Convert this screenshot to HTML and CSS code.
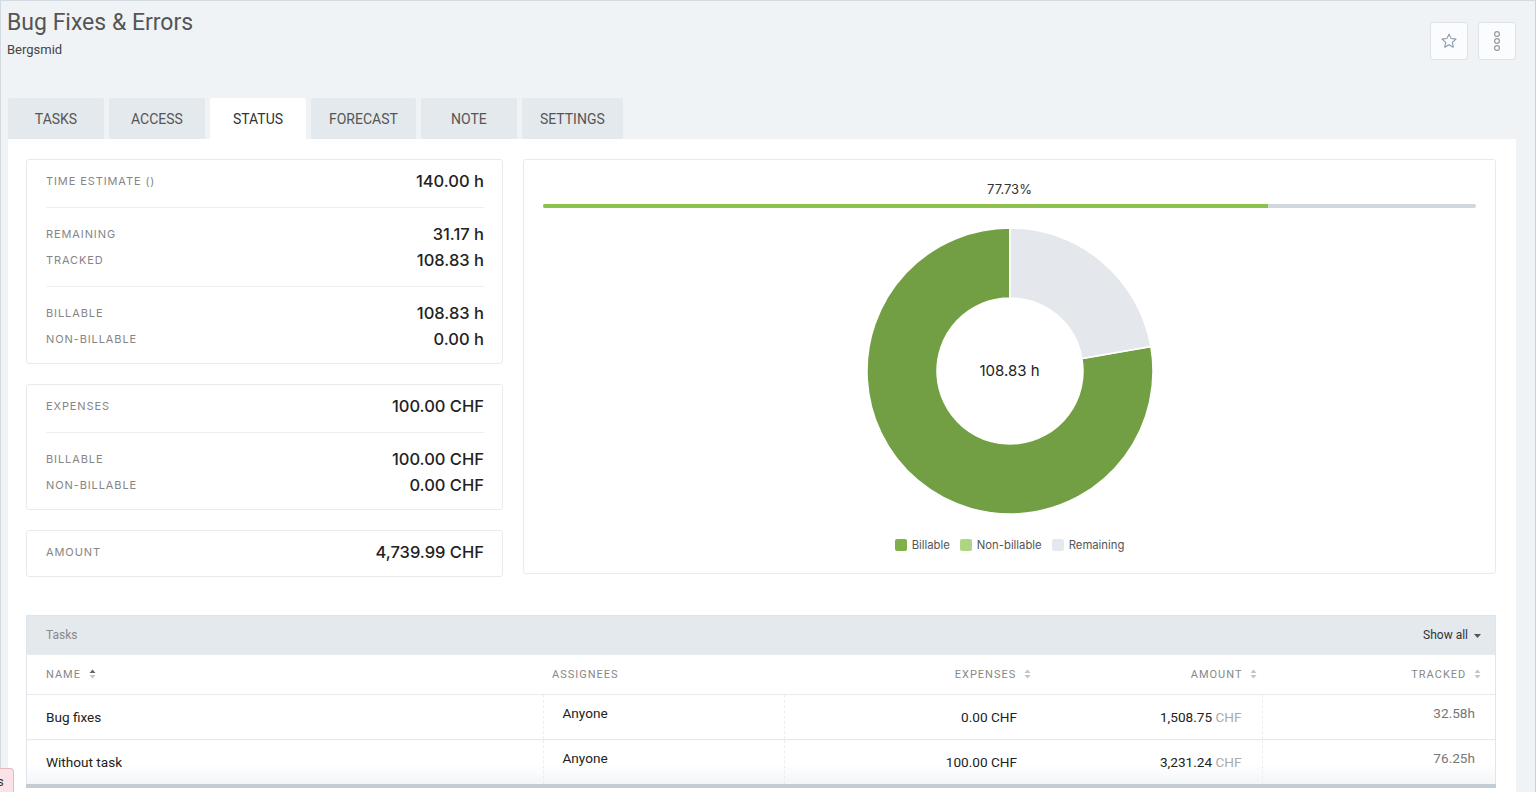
FILE: index.html
```html
<!DOCTYPE html>
<html>
<head>
	<meta charset="utf-8">
	<title>Bug Fixes &amp; Errors</title>
	<link rel="stylesheet" href="styles.css">
</head>
<body>
	<div class="frame">
		<div class="top">
			<div class="heading">
				<h1>Bug Fixes &amp; Errors</h1>
				<div class="client">Bergsmid</div>
			</div>
			<div class="actions">
				<button class="icon_btn" title="Favorite">
					<svg width="18" height="18" viewBox="0 0 24 24"><path d="M12 2.8l2.8 6 6.5.7-4.9 4.4 1.4 6.4L12 17l-5.8 3.3 1.4-6.4-4.9-4.4 6.5-.7z" fill="none" stroke="#8797a6" stroke-width="1.4" stroke-linejoin="round"/></svg>
				</button>
				<button class="icon_btn" title="More">
					<svg width="10" height="22" viewBox="0 0 10 22"><circle cx="5" cy="4" r="2.4" fill="none" stroke="#9a9a9a" stroke-width="1.2"/><circle cx="5" cy="11" r="2.4" fill="none" stroke="#9a9a9a" stroke-width="1.2"/><circle cx="5" cy="18" r="2.4" fill="none" stroke="#9a9a9a" stroke-width="1.2"/></svg>
				</button>
			</div>
		</div>

		<div class="tabs">
			<div class="tab">Tasks</div>
			<div class="tab">Access</div>
			<div class="tab active">Status</div>
			<div class="tab">Forecast</div>
			<div class="tab">Note</div>
			<div class="tab">Settings</div>
		</div>

		<div class="panel">
			<div class="overview">
				<div class="stats">
					<div class="card">
						<div class="section">
							<div class="row"><span class="label">Time estimate ()</span><span class="value">140.00 h</span></div>
						</div>
						<div class="section">
							<div class="row"><span class="label">Remaining</span><span class="value">31.17 h</span></div>
							<div class="row"><span class="label">Tracked</span><span class="value">108.83 h</span></div>
						</div>
						<div class="section">
							<div class="row"><span class="label">Billable</span><span class="value">108.83 h</span></div>
							<div class="row"><span class="label">Non-billable</span><span class="value">0.00 h</span></div>
						</div>
					</div>
					<div class="card">
						<div class="section">
							<div class="row"><span class="label">Expenses</span><span class="value">100.00 CHF</span></div>
						</div>
						<div class="section">
							<div class="row"><span class="label">Billable</span><span class="value">100.00 CHF</span></div>
							<div class="row"><span class="label">Non-billable</span><span class="value">0.00 CHF</span></div>
						</div>
					</div>
					<div class="card">
						<div class="section">
							<div class="row"><span class="label">Amount</span><span class="value">4,739.99 CHF</span></div>
						</div>
					</div>
				</div>

				<div class="card chart">
					<div class="percent">77.73%</div>
					<div class="progress"><div class="progress_fill" style="width: 77.73%"></div></div>
					<div class="donut">
						<svg width="290" height="290" viewBox="-145 -145 290 290">
							<path d="M140.89,-24.47 A143,143 0 1 1 0,-143 L0,-73 A73,73 0 1 0 71.93,-12.49 Z" fill="#739f44" stroke="#fff" stroke-width="1.5"/>
							<path d="M0,-143 A143,143 0 0 1 140.89,-24.47 L71.93,-12.49 A73,73 0 0 0 0,-73 Z" fill="#e4e8ed" stroke="#fff" stroke-width="1.5"/>
						</svg>
						<div class="donut_label">108.83 h</div>
					</div>
					<div class="legend">
						<span class="legend_item"><i class="sw billable"></i>Billable</span>
						<span class="legend_item"><i class="sw nonbillable"></i>Non-billable</span>
						<span class="legend_item"><i class="sw remaining"></i>Remaining</span>
					</div>
				</div>
			</div>

			<div class="tasks">
				<div class="tasks_head">
					<span class="tasks_title">Tasks</span>
					<span class="show_all">Show all <svg width="7" height="4" viewBox="0 0 7 4"><path d="M0 0h7L3.5 4z" fill="#555"/></svg></span>
				</div>
				<table>
					<colgroup>
						<col style="width: 516px">
						<col style="width: 241px">
						<col style="width: 261px">
						<col style="width: 217px">
						<col>
					</colgroup>
					<thead>
						<tr>
							<th class="c_name">Name <svg class="sort" width="7" height="10" viewBox="0 0 7 10"><path d="M0.5 4L3.5 0.5 6.5 4z" fill="#666"/><path d="M0.5 6L3.5 9.5 6.5 6z" fill="#c4c4c4"/></svg></th>
							<th class="c_assign">Assignees</th>
							<th class="c_exp">Expenses <svg class="sort" width="7" height="10" viewBox="0 0 7 10"><path d="M0.5 4L3.5 0.5 6.5 4z" fill="#c4c4c4"/><path d="M0.5 6L3.5 9.5 6.5 6z" fill="#c4c4c4"/></svg></th>
							<th class="c_amount">Amount <svg class="sort" width="7" height="10" viewBox="0 0 7 10"><path d="M0.5 4L3.5 0.5 6.5 4z" fill="#c4c4c4"/><path d="M0.5 6L3.5 9.5 6.5 6z" fill="#c4c4c4"/></svg></th>
							<th class="c_tracked">Tracked <svg class="sort" width="7" height="10" viewBox="0 0 7 10"><path d="M0.5 4L3.5 0.5 6.5 4z" fill="#c4c4c4"/><path d="M0.5 6L3.5 9.5 6.5 6z" fill="#c4c4c4"/></svg></th>
						</tr>
					</thead>
					<tbody>
						<tr>
							<td class="c_name">Bug fixes</td>
							<td class="c_assign">Anyone</td>
							<td class="c_exp">0.00 CHF</td>
							<td class="c_amount">1,508.75 <span class="cur">CHF</span></td>
							<td class="c_tracked">32.58h</td>
						</tr>
						<tr class="last">
							<td class="c_name">Without task</td>
							<td class="c_assign">Anyone</td>
							<td class="c_exp">100.00 CHF</td>
							<td class="c_amount">3,231.24 <span class="cur">CHF</span></td>
							<td class="c_tracked">76.25h</td>
						</tr>
					</tbody>
				</table>
				<div class="scrollbar"></div>
			</div>
		</div>
	</div>
	<div class="corner_tab">s</div>
</body>
</html>
```

FILE: styles.css
```css
html, body {
	margin: 0;
	height: 792px;
	overflow: hidden;
}
body {
	font-family: Roboto, "Liberation Sans", sans-serif;
	color: #222;
	background-color: #eff3f6;
}
.frame {
	height: 792px;
	box-sizing: border-box;
	border-top: 1px solid #d3dbe1;
	border-left: 1px solid #d3dbe1;
	border-right: 1px solid #c9d2d9;
}

/* header */
.top {
	height: 97px;
	box-sizing: border-box;
	display: flex;
	justify-content: space-between;
	padding: 7px 19px 0 6px;
}
.top h1 {
	margin: 0;
	font-size: 23px;
	line-height: 30px;
	font-weight: 400;
	color: #555;
}
.client {
	font-size: 13px;
	line-height: 18px;
	margin-top: 3px;
	color: #444;
}
.actions {
	display: flex;
	gap: 10px;
	margin-top: 14px;
}
.icon_btn {
	width: 38px;
	height: 38px;
	padding: 0;
	display: flex;
	align-items: center;
	justify-content: center;
	background: #fbfcfd;
	border: 1px solid #dde3e8;
	border-radius: 3px;
}

/* tabs */
.tabs {
	display: flex;
	gap: 5px;
	padding-left: 7px;
}
.tab {
	min-width: 96px;
	height: 41px;
	box-sizing: border-box;
	padding: 0 18px;
	display: flex;
	align-items: center;
	justify-content: center;
	background: #e4e9ed;
	border-radius: 2px 2px 0 0;
	font-size: 14px;
	text-transform: uppercase;
	color: #555;
}
.tab.active {
	background: #fff;
	color: #333;
}

/* panel */
.panel {
	margin: 0 19px 0 7px;
	background: #fff;
	height: 653px;
	padding: 20px 20px 0 18px;
	box-sizing: border-box;
}
.overview {
	display: grid;
	grid-template-columns: 477px 1fr;
	gap: 20px;
}
.stats {
	display: flex;
	flex-direction: column;
	gap: 20px;
}
.card {
	border: 1px solid #e6ebef;
	border-radius: 3px;
	padding: 8px 18px 11px 19px;
	font-family: Inter, "Noto Sans", sans-serif;
}
.section {
	padding: 13px 0;
	border-top: 1px solid #edf0f3;
}
.section:first-child {
	padding-top: 0;
	border-top: none;
}
.section:last-child {
	padding-bottom: 0;
}
.row {
	height: 26px;
	display: flex;
	align-items: center;
	justify-content: space-between;
}
.label {
	font-size: 11px;
	letter-spacing: 0.9px;
	text-transform: uppercase;
	color: #858585;
}
.value {
	font-size: 16.5px;
	font-weight: 500;
	color: #222;
}

/* chart */
.chart {
	padding: 21px 19px 20px 19px;
	display: flex;
	flex-direction: column;
	align-items: center;
	margin-bottom: 3px;
}
.percent {
	font-size: 13px;
	line-height: 16px;
	color: #333;
}
.progress {
	align-self: stretch;
	height: 4px;
	margin-top: 7px;
	background: #cfd8dd;
	border-radius: 2px;
	overflow: hidden;
}
.progress_fill {
	height: 100%;
	background: #8cc04f;
}
.donut {
	position: relative;
	width: 290px;
	height: 290px;
	margin-top: 18px;
}
.donut svg {
	display: block;
}
.donut_label {
	position: absolute;
	top: 0;
	left: 0;
	right: 0;
	bottom: 0;
	display: flex;
	align-items: center;
	justify-content: center;
	font-size: 15px;
	color: #222;
	padding-bottom: 2px;
	box-sizing: border-box;
}
.legend {
	margin-top: 21px;
	display: flex;
	gap: 10px;
	font-size: 11.3px;
	line-height: 16px;
	color: #555;
}
.legend_item {
	display: flex;
	align-items: center;
}
.sw {
	width: 12px;
	height: 12px;
	border-radius: 2px;
	margin-right: 5px;
}
.sw.billable {
	background: #80b04b;
}
.sw.nonbillable {
	background: #aed582;
}
.sw.remaining {
	background: #e4e9ee;
}

/* tasks table */
.tasks {
	margin-top: 38px;
	border: 1px solid #dfe5ea;
	border-bottom: none;
}
.tasks_head {
	height: 38px;
	display: flex;
	align-items: center;
	justify-content: space-between;
	padding: 0 14px 0 19px;
	background: #e4e9ed;
	font-size: 12px;
}
.tasks_title {
	color: #888;
}
.show_all {
	color: #333;
}
.show_all svg {
	margin-left: 3px;
	vertical-align: middle;
}
table {
	width: 100%;
	border-collapse: collapse;
	table-layout: fixed;
}
th {
	height: 39px;
	padding: 0;
	font-size: 11px;
	font-weight: 400;
	letter-spacing: 1px;
	text-transform: uppercase;
	color: #888;
	text-align: left;
	border-top: 1px solid #e6ebef;
}
.sort {
	margin-left: 4px;
	vertical-align: -1px;
}
td {
	height: 44px;
	padding: 0;
	font-size: 13.6px;
	border-top: 1px solid #e6ebef;
}
.c_name {
	padding-left: 19px;
}
th.c_assign {
	padding-left: 9px;
}
td.c_assign {
	padding-left: 19px;
	border-left: 1px dashed #eceff2;
	vertical-align: top;
	padding-top: 10px;
	height: 34px;
}
.c_exp, .c_amount, .c_tracked {
	text-align: right;
}
th.c_exp {
	padding-right: 14px;
}
td.c_exp {
	padding-right: 28px;
	border-left: 1px dashed #eceff2;
}
th.c_amount {
	padding-right: 5px;
}
td.c_amount {
	padding-right: 20px;
	border-right: 1px dashed #eceff2;
}
th.c_tracked {
	padding-right: 14px;
}
td.c_tracked {
	padding-right: 20px;
	color: #777;
	vertical-align: top;
	padding-top: 10px;
	height: 34px;
}
.cur {
	color: #aaa;
}
tr.last td {
	background: linear-gradient(to bottom, #fff 55%, #f3f5f7);
}
.scrollbar {
	height: 4px;
	background: #c3ccd3;
	margin: 0 -1px;
}

.corner_tab {
	position: fixed;
	left: -6px;
	bottom: 0;
	width: 20px;
	height: 24px;
	box-sizing: border-box;
	padding: 5px 0 0 2px;
	background: #f9e3e6;
	border: 1px solid #e6b9c0;
	border-bottom: none;
	border-radius: 0 4px 0 0;
	font-size: 13px;
	color: #333;
}
```
